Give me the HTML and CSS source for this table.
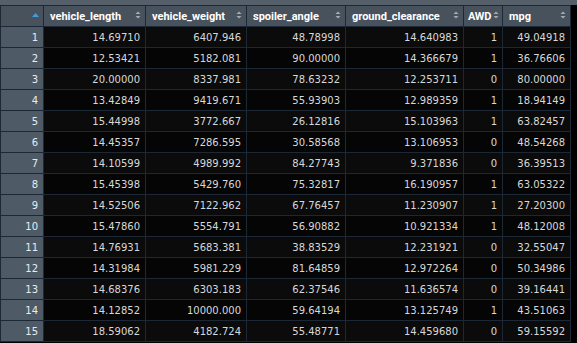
FILE: index.html
```html
<!DOCTYPE html>
<html>
<head>
<meta charset="utf-8">
<link rel="stylesheet" href="styles.css">
</head>
<body>
<div class="strip"></div>
<table class="grid">
<colgroup>
<col class="c0"><col class="c1"><col class="c2"><col class="c3"><col class="c4"><col class="c5"><col class="c6">
</colgroup>
<thead>
<tr>
<th class="rn"><svg class="up" width="7" height="4" viewBox="0 0 7 4"><polygon points="0,4 3.5,0 7,4" fill="#3f9ce0"/></svg></th>
<th><span>vehicle_length</span><svg class="sort" width="6" height="8" viewBox="0 0 6 8"><polygon points="0.5,3 3,0.5 5.5,3" fill="#a3acb4"/><polygon points="0.5,5 3,7.5 5.5,5" fill="#a3acb4"/></svg></th>
<th><span>vehicle_weight</span><svg class="sort" width="6" height="8" viewBox="0 0 6 8"><polygon points="0.5,3 3,0.5 5.5,3" fill="#a3acb4"/><polygon points="0.5,5 3,7.5 5.5,5" fill="#a3acb4"/></svg></th>
<th><span>spoiler_angle</span><svg class="sort" width="6" height="8" viewBox="0 0 6 8"><polygon points="0.5,3 3,0.5 5.5,3" fill="#a3acb4"/><polygon points="0.5,5 3,7.5 5.5,5" fill="#a3acb4"/></svg></th>
<th><span>ground_clearance</span><svg class="sort" width="6" height="8" viewBox="0 0 6 8"><polygon points="0.5,3 3,0.5 5.5,3" fill="#a3acb4"/><polygon points="0.5,5 3,7.5 5.5,5" fill="#a3acb4"/></svg></th>
<th class="narrow"><span>AWD</span><svg class="sort" width="6" height="8" viewBox="0 0 6 8"><polygon points="0.5,3 3,0.5 5.5,3" fill="#a3acb4"/><polygon points="0.5,5 3,7.5 5.5,5" fill="#a3acb4"/></svg></th>
<th><span>mpg</span><svg class="sort" width="6" height="8" viewBox="0 0 6 8"><polygon points="0.5,3 3,0.5 5.5,3" fill="#a3acb4"/><polygon points="0.5,5 3,7.5 5.5,5" fill="#a3acb4"/></svg></th>
</tr>
</thead>
<tbody>
<tr><td class="rn">1</td><td>14.69710</td><td>6407.946</td><td>48.78998</td><td>14.640983</td><td>1</td><td>49.04918</td></tr>
<tr><td class="rn">2</td><td>12.53421</td><td>5182.081</td><td>90.00000</td><td>14.366679</td><td>1</td><td>36.76606</td></tr>
<tr><td class="rn">3</td><td>20.00000</td><td>8337.981</td><td>78.63232</td><td>12.253711</td><td>0</td><td>80.00000</td></tr>
<tr><td class="rn">4</td><td>13.42849</td><td>9419.671</td><td>55.93903</td><td>12.989359</td><td>1</td><td>18.94149</td></tr>
<tr><td class="rn">5</td><td>15.44998</td><td>3772.667</td><td>26.12816</td><td>15.103963</td><td>1</td><td>63.82457</td></tr>
<tr><td class="rn">6</td><td>14.45357</td><td>7286.595</td><td>30.58568</td><td>13.106953</td><td>0</td><td>48.54268</td></tr>
<tr><td class="rn">7</td><td>14.10599</td><td>4989.992</td><td>84.27743</td><td>9.371836</td><td>0</td><td>36.39513</td></tr>
<tr><td class="rn">8</td><td>15.45398</td><td>5429.760</td><td>75.32817</td><td>16.190957</td><td>1</td><td>63.05322</td></tr>
<tr><td class="rn">9</td><td>14.52506</td><td>7122.962</td><td>67.76457</td><td>11.230907</td><td>1</td><td>27.20300</td></tr>
<tr><td class="rn">10</td><td>15.47860</td><td>5554.791</td><td>56.90882</td><td>10.921334</td><td>1</td><td>48.12008</td></tr>
<tr><td class="rn">11</td><td>14.76931</td><td>5683.381</td><td>38.83529</td><td>12.231921</td><td>0</td><td>32.55047</td></tr>
<tr><td class="rn">12</td><td>14.31984</td><td>5981.229</td><td>81.64859</td><td>12.972264</td><td>0</td><td>50.34986</td></tr>
<tr><td class="rn">13</td><td>14.68376</td><td>6303.183</td><td>62.37546</td><td>11.636574</td><td>0</td><td>39.16441</td></tr>
<tr><td class="rn">14</td><td>14.12852</td><td>10000.000</td><td>59.64194</td><td>13.125749</td><td>1</td><td>43.51063</td></tr>
<tr><td class="rn">15</td><td>18.59062</td><td>4182.724</td><td>55.48771</td><td>14.459680</td><td>0</td><td>59.15592</td></tr>
</tbody>
</table>
</body>
</html>
```
FILE: styles.css
```css
html, body {
  margin: 0;
  padding: 0;
  background: #000;
  overflow: hidden;
  height: 343px;
}
.strip {
  height: 5px;
  background: #545f6a;
  width: 577px;
}
.grid {
  border-collapse: collapse;
  table-layout: fixed;
  width: 570px;
  font-family: "DejaVu Sans", sans-serif;
  font-size: 10px;
}
.c0 { width: 43px; }
.c1 { width: 102px; }
.c2 { width: 101px; }
.c3 { width: 99px; }
.c4 { width: 118px; }
.c5 { width: 39px; }
.c6 { width: 68px; }
.grid th, .grid td {
  height: 21px;
  padding: 0 5px 0 6px;
  border: 1px solid #1c2835;
  white-space: nowrap;
  overflow: hidden;
  box-sizing: border-box;
}
.grid th {
  background: #47525d;
  color: #fff;
  font-family: Roboto, "DejaVu Sans", sans-serif;
  font-weight: bold;
  font-size: 11px;
  text-align: left;
  position: relative;
}
.grid th.narrow {
  padding-left: 4px;
  letter-spacing: -0.3px;
}
.grid th .sort {
  position: absolute;
  right: 4px;
  top: 5px;
}
.grid th.narrow .sort {
  right: 3px;
}
.grid th.rn {
  text-align: right;
  padding-right: 3px;
}
.grid th .up {
  position: absolute;
  right: 4px;
  top: 7px;
}
.grid td {
  color: #d8d8d8;
  text-align: right;
  background: #050505;
}
.grid tbody tr:nth-child(odd) td {
  background: #0b0b0b;
}
.grid td.rn, .grid tbody tr:nth-child(odd) td.rn {
  background: #4e5a65;
  color: #e8ecef;
}
```
